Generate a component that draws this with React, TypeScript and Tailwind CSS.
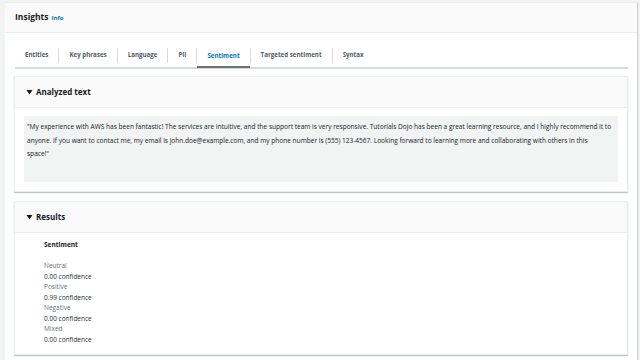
import React from "react";

const font = { fontFamily: '"Open Sans", "Noto Sans", sans-serif' };

function Caret() {
  return (
    <svg width="7" height="6" viewBox="0 0 7 6" className="shrink-0">
      <path d="M0.5 1 L6.5 1 L3.5 5.5 Z" fill="#16191f" />
    </svg>
  );
}

const tabs = ["Entities", "Key phrases", "Language", "PII", "Sentiment", "Targeted sentiment", "Syntax"];

const results: [string, string][] = [
  ["Neutral", "0.00 confidence"],
  ["Positive", "0.99 confidence"],
  ["Negative", "0.00 confidence"],
  ["Mixed", "0.00 confidence"],
];

export default function App() {
  return (
    <div className="w-[640px] h-[360px] overflow-hidden bg-[#f2f3f3] pt-[3px] pl-[5px]" style={font}>
      <div className="w-[632px] h-[400px] bg-white shadow-[1px_0_1px_rgba(0,28,36,0.15)]">
        <div className="h-[30px] bg-[#fafafa] border-b border-[#eaeded] flex items-center pl-[10px] gap-[3px]">
          <span className="text-[8.5px] font-bold text-[#16191f]">Insights</span>
          <span className="text-[6px] font-bold text-[#0073bb] mt-[1px]">Info</span>
        </div>
        <div className="px-[9px]">
          <div className="mt-[10px] ml-[1px] w-[613px] flex items-stretch h-[26px] border-b-[2px] border-[#d5dbdb]">
            {tabs.map((t, i) => (
              <div key={t} className="flex items-center">
                {i > 0 && <div className="w-px h-[15px] bg-[#d5dbdb]" />}
                <div
                  className={
                    "h-full flex items-center px-[10px] text-[6.2px] font-bold " +
                    (t === "Sentiment"
                      ? "text-[#0073bb] border-b-[2px] border-[#687078] mb-[-2px] pt-[2px]"
                      : "text-[#545b64]")
                  }
                >
                  {t}
                </div>
              </div>
            ))}
          </div>

          <div className="mt-[7px] w-[614px] bg-white border border-[#eaeded] shadow-[0_1px_1px_rgba(0,28,36,0.25)]">
            <div className="h-[31px] bg-[#fafafa] border-b border-[#eaeded] flex items-center pl-[11px] gap-[3px]">
              <Caret />
              <span className="text-[8px] font-bold text-[#16191f]">Analyzed text</span>
            </div>
            <div className="px-[9px] pt-[8px] pb-[9px]">
              <div className="h-[66px] bg-[#f2f3f3] pl-[3px] pr-[4px] pt-[4px] text-[6.55px] leading-[13.7px] text-[#16191f] whitespace-nowrap overflow-hidden">
                "My experience with AWS has been fantastic! The services are intuitive, and the support team is very responsive. Tutorials Dojo has been a great learning resource, and I highly recommend it to
                <br />
                anyone. If you want to contact me, my email is john.doe@example.com, and my phone number is (555) 123-4567. Looking forward to learning more and collaborating with others in this
                <br />
                space!"
              </div>
            </div>
          </div>

          <div className="mt-[9px] w-[614px] bg-white border border-[#eaeded] shadow-[0_1px_1px_rgba(0,28,36,0.25)]">
            <div className="h-[31px] bg-[#fafafa] border-b border-[#eaeded] flex items-center pl-[11px] gap-[3px]">
              <Caret />
              <span className="text-[8px] font-bold text-[#16191f]">Results</span>
            </div>
            <div className="pl-[29px] pt-[7px] pb-[9px]">
              <div className="text-[6.5px] font-bold text-[#16191f] leading-[10px]">Sentiment</div>
              <div className="mt-[11px]">
                {results.map(([k, v]) => (
                  <div key={k} className="text-[6.5px] leading-[10.5px]">
                    <div className="text-[#687078]">{k}</div>
                    <div className="text-[#232f3e]">{v}</div>
                  </div>
                ))}
              </div>
            </div>
          </div>
        </div>
      </div>
    </div>
  );
}
